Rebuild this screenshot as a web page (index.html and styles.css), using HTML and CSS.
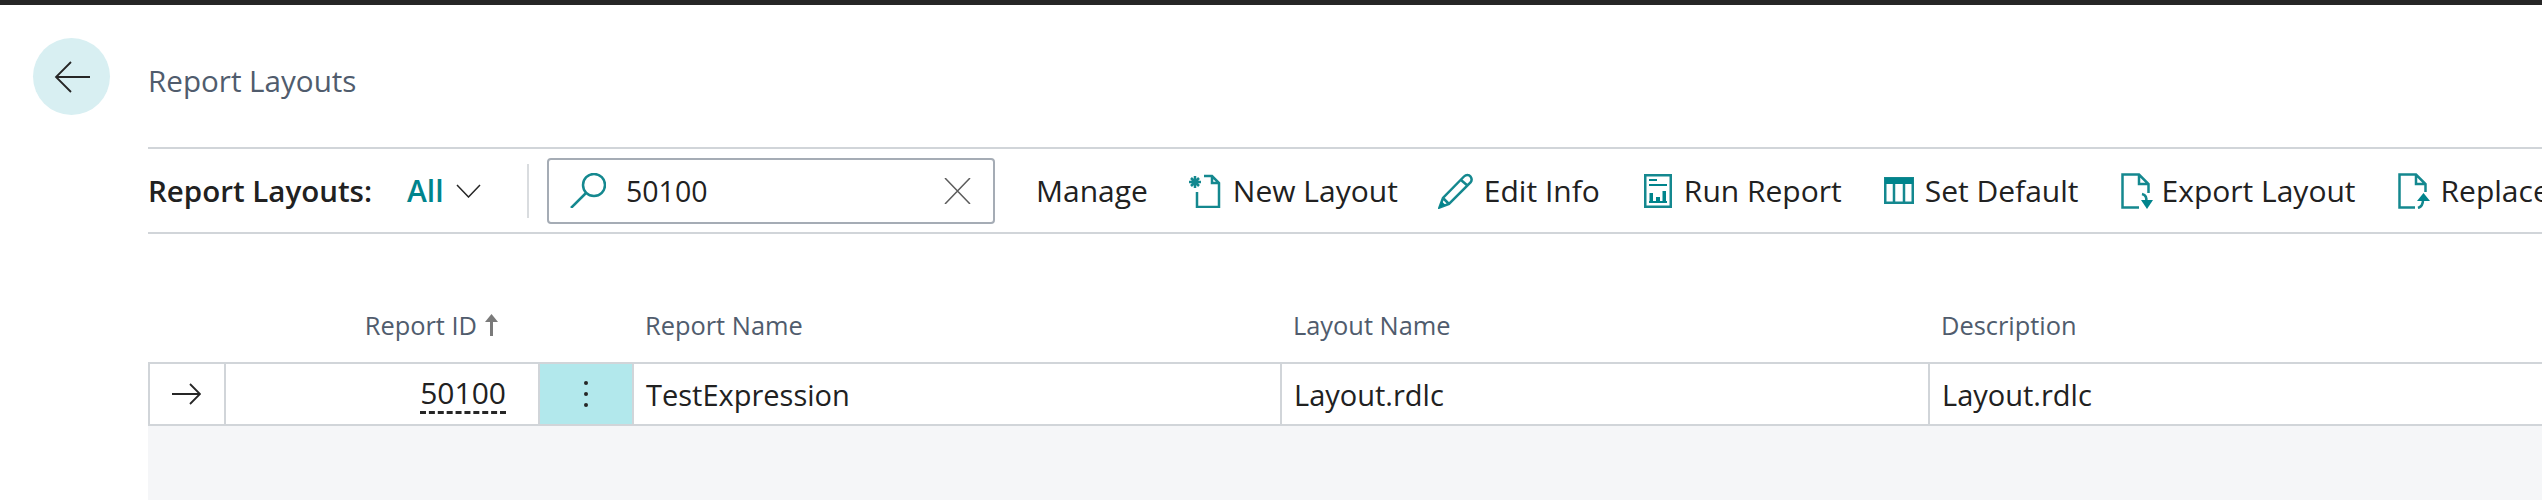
FILE: index.html
```html
<!DOCTYPE html>
<html lang="en">
<head>
<meta charset="utf-8">
<title>Report Layouts</title>
<link rel="stylesheet" href="styles.css">
</head>
<body>
<div class="topbar"></div>
<div class="page">
  <aside class="side">
    <button class="back" aria-label="Back">
      <svg width="36" height="32" viewBox="0 0 36 32" class="ink"><path d="M17 1 2 16l15 15M2 16h34"/></svg>
    </button>
  </aside>
  <main class="main">
    <h1 class="title">Report Layouts</h1>
    <div class="toolbar">
      <span class="view-label">Report Layouts:</span>
      <span class="view-all">All</span>
      <svg class="chev ink" width="25" height="14" viewBox="0 0 25 14"><path d="M1 1l11.500 12L24 1"/></svg>
      <span class="sep"></span>
      <div class="search">
        <svg class="teal" width="36" height="35" viewBox="0 0 36 35"><circle cx="24" cy="12" r="11"/><path d="M16 20 1 35"/></svg>
        <span class="search-text">50100</span>
        <svg class="clear" width="27" height="26" viewBox="0 0 27 26"><path d="M1 0l25 26M26 0 1 26"/></svg>
      </div>
      <span class="action manage">Manage</span>
      <span class="action a-new">
        <svg class="teal" width="32" height="34" viewBox="0 0 32 34"><path d="M8 18v15h22V9l-7-7h-8M23 2v7h7"/><path d="M6 2v12M0 8h12M2 4l8 8M10 4l-8 8"/></svg>
        New Layout
      </span>
      <span class="action a-edit">
        <svg class="teal" width="36" height="36" viewBox="0 0 36 36"><path d="M1.500 34.500 5 25 26 3.500c2-2 5-2 6.500 0s1.500 4 0 6L11 31zM5 25l6 6M23 7l7 6"/><path class="fill" d="M1 35l2.500-7 4 4z"/></svg>
        Edit Info
      </span>
      <span class="action a-run">
        <svg class="teal" width="28" height="34" viewBox="0 0 28 34"><path d="M1.250 1.250h25.500v31.500H1.250z"/><path class="fill" d="M5 5h8v2H5zM5 10h18v2H5zM5.500 19h3.500v8H5.500zM12 23h4v4h-4zM18.500 17H22v10h-3.500zM5 27h18v2H5z"/></svg>
        Run Report
      </span>
      <span class="action a-set">
        <svg class="teal" width="30" height="27" viewBox="0 0 30 27"><path d="M1.250 1.250h27.500v24.500H1.250zM10 6v20M20 6v20"/><path class="fill" d="M1 1h28v6H1z"/></svg>
        Set Default
      </span>
      <span class="action a-export">
        <svg class="teal" width="32" height="36" viewBox="0 0 32 36"><path d="M18 34.500H1.500v-33H18l9.500 9.500v9M18 1.500V11h9.500"/><path d="M21 21c4 1 5 4 4 8"/><path class="fill" d="M20 27h12l-6 9z"/></svg>
        Export Layout
      </span>
      <span class="action a-replace">
        <svg class="teal" width="32" height="36" viewBox="0 0 32 36"><path d="M17 34.500H1.500v-33H18l9.500 9.500v8M18 1.500V11h9.500"/><path d="M20 35c3-1 5-4 5-8"/><path class="fill" d="M25.500 20l6.500 8H19z"/></svg>
        Replace
      </span>
    </div>
    <div class="grid-head">
      <span></span>
      <span class="col-id">Report ID <svg class="sort" width="13" height="22" viewBox="0 0 13 22"><path d="M6.500 0 13 8H8v14H5V8H0z"/></svg></span>
      <span></span>
      <span class="col">Report Name</span>
      <span class="col">Layout Name</span>
      <span class="col">Description</span>
    </div>
    <div class="grid-row">
      <span class="cell cell-arrow">
        <svg class="ink" width="29" height="22" viewBox="0 0 29 22"><path d="M18 1l10 10-10 10M28 11H0"/></svg>
      </span>
      <span class="cell cell-id"><a class="link">50100</a></span>
      <span class="cell cell-menu"><i></i><i></i><i></i></span>
      <span class="cell">TestExpression</span>
      <span class="cell">Layout.rdlc</span>
      <span class="cell">Layout.rdlc</span>
    </div>
    <div class="grid-empty"></div>
  </main>
</div>
</body>
</html>
```
FILE: styles.css
```css
* { box-sizing: border-box; }
html, body { height: 100%; }
body {
  margin: 0;
  background: #fff;
  color: #212121;
  font: 30px "Open Sans", "Noto Sans", sans-serif;
  overflow: hidden;
  display: flex;
  flex-direction: column;
}
svg { display: block; flex: none; fill: none; }
.ink path { stroke: #262626; stroke-width: 1.800; }
.chev path { stroke-width: 1.500; }
.teal path, .teal circle { stroke: #14888f; stroke-width: 2.500; }
.teal .fill { fill: #00848c; stroke: none; }

.topbar { height: 5px; background: #262626; flex: none; }
.page { display: flex; flex: 1; min-height: 0; }
.side { width: 148px; flex: none; padding: 33px 0 0 33px; }
.back {
  width: 77px; height: 77px;
  border: 0; border-radius: 50%; padding: 0;
  background: #d8eff2;
  display: flex; align-items: center; justify-content: center;
}
.main { flex: 1; min-width: 0; display: flex; flex-direction: column; overflow: hidden; }

.title {
  margin: 0;
  height: 142px;
  padding-top: 56px;
  font-size: 29.600px;
  line-height: 40px;
  font-weight: 400;
  color: #505c6d;
}
.toolbar {
  height: 87px;
  border-top: 2px solid #d1d5d9;
  border-bottom: 2px solid #d1d5d9;
  display: flex;
  align-items: center;
  white-space: nowrap;
}
.view-label { font-weight: 600; font-size: 29.500px; width: 259px; flex: none; }
.view-all { color: #00848c; font-weight: 600; width: 49px; flex: none; }
.chev { margin-right: 46px; }
.sep { width: 2px; height: 54px; background: #d9dcdf; flex: none; margin-right: 18px; }
.search {
  width: 448px; height: 66px; flex: none;
  border: 2px solid #a5acb5; border-radius: 4px;
  display: flex; align-items: center;
  padding: 0 22px 0 21px;
}
.search-text { margin-left: 20px; flex: 1; font-size: 28.500px; }
.clear path { stroke: #5c5c5c; stroke-width: 1.500; }

.action { display: flex; align-items: center; flex: none; }
.manage { margin-left: 41px; }
.a-new { margin-left: 41px; gap: 12px; }
.a-edit { margin-left: 40px; gap: 10px; }
.a-run { margin-left: 44px; gap: 12px; }
.a-set { margin-left: 42px; gap: 11px; }
.a-export { margin-left: 42px; gap: 9px; }
.a-replace { margin-left: 42px; gap: 11px; }

.grid-head, .grid-row {
  display: grid;
  grid-template-columns: 76px 314px 94px 648px 648px 614px;
}
.grid-head {
  height: 128px;
  align-items: end;
  padding-bottom: 20px;
  font-size: 25.400px;
  line-height: 34px;
  color: #505c6d;
}
.col { padding-left: 13px; }
.col-id { display: flex; align-items: center; justify-content: flex-end; gap: 8px; padding-right: 40px; }
.sort path { fill: #7a7a7a; }
.grid-row {
  height: 64px;
  border-top: 2px solid #d1d5d9;
  border-bottom: 2px solid #d1d5d9;
  border-left: 2px solid #d1d5d9;
  font-size: 29px;
}
.cell {
  border-right: 2px solid #d1d5d9;
  padding-left: 12px;
  display: flex;
  align-items: center;
  white-space: nowrap;
}
.grid-row .cell:last-child { border-right: 0; }
.cell-arrow { padding-left: 22px; }
.cell-id { justify-content: flex-end; padding: 0 32px 0 0; font-size: 30px; }
.link { border-bottom: 3px dashed #262626; line-height: 36px; }
.cell-menu {
  background: #b2e8ec;
  flex-direction: column; justify-content: center; gap: 7px; padding: 0;
}
.cell-menu i { width: 4px; height: 4px; border-radius: 50%; background: #262626; }
.grid-empty { flex: 1; background: #f5f6f8; }
```
